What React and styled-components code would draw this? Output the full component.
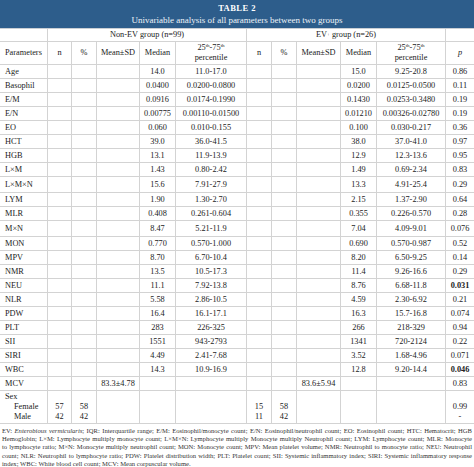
import React from "react";
import styled, { createGlobalStyle } from "styled-components";

const Global = createGlobalStyle`
  html, body { margin: 0; padding: 0; background: #ffffff; }
  body { font-family: "Liberation Serif", "Times New Roman", serif; color: #222; }
  * { box-sizing: border-box; }
`;

const COLS = "48px 24px 25px 43px 36px 71px 25px 25px 44px 36px 69px 1fr";
const LINE = "#d3d3d3";

const Page = styled.div`
  width: 474px;
  height: 467px;
  overflow: hidden;
  display: flex;
  flex-direction: column;
  background: #fff;
`;

const TitleBar = styled.div`
  background: #2d5d8b;
  height: 29px;
  flex: none;
  display: flex;
  flex-direction: column;
  align-items: center;
  justify-content: center;
  color: #fff;
  gap: 2px;
  border-bottom: 1px solid #c9ced4;
`;

const Title = styled.div`
  font-weight: bold;
  font-size: 8.6px;
  letter-spacing: 0.4px;
  line-height: 10px;
`;

const Subtitle = styled.div`
  font-size: 9px;
  line-height: 11px;
  color: #eef3f8;
`;

const Table = styled.div`
  flex: none;
  display: flex;
  flex-direction: column;
  font-size: 8.3px;
`;

const Row = styled.div`
  display: grid;
  grid-template-columns: ${COLS};
  height: ${(p) => p.$h}px;
  flex: none;
  border-bottom: 1px solid ${LINE};
`;

const Cell = styled.div`
  grid-column: span ${(p) => p.$span || 1};
  display: flex;
  align-items: center;
  justify-content: ${(p) => (p.$left ? "flex-start" : "center")};
  padding-left: ${(p) => (p.$left ? 5 : 0)}px;
  border-right: ${(p) => (p.$last ? "none" : `1px solid ${LINE}`)};
  font-weight: ${(p) => (p.$bold ? "bold" : "normal")};
  font-style: ${(p) => (p.$italic ? "italic" : "normal")};
  line-height: 10px;
  white-space: nowrap;
  overflow: hidden;
`;

const Sup = styled.sup`
  font-size: 5px;
  vertical-align: 3px;
  line-height: 0;
`;

const Stack = styled.div`
  display: flex;
  flex-direction: column;
  line-height: 10px;
  align-items: ${(p) => (p.$left ? "flex-start" : "center")};
`;

const Indent = styled.span`
  padding-left: ${(p) => (p.$in ? 9 : 0)}px;
`;

const Footnote = styled.div`
  font-size: 6.6px;
  line-height: 8.2px;
  color: #333;
  padding: 3px 2px 0 2px;
  flex: 1;
`;

const FootLine = styled.div`
  text-align: justify;
  text-align-last: ${(p) => (p.$end ? "left" : "justify")};
  white-space: nowrap;
`;

const Strip = styled.div`
  height: 3px;
  flex: none;
  background: #eceef1;
`;

const rows = [
  ["Age", "14.0", "11.0-17.0", "15.0", "9.25-20.8", "0.86"],
  ["Basophil", "0.0400", "0.0200-0.0800", "0.0200", "0.0125-0.0500", "0.11"],
  ["E/M", "0.0916", "0.0174-0.1990", "0.1430", "0.0253-0.3480", "0.19"],
  ["E/N", "0.00775", "0.00110-0.01500", "0.01210", "0.00326-0.02780", "0.19"],
  ["EO", "0.060", "0.010-0.155", "0.100", "0.030-0.217", "0.36"],
  ["HCT", "39.0", "36.0-41.5", "38.0", "37.0-41.0", "0.97"],
  ["HGB", "13.1", "11.9-13.9", "12.9", "12.3-13.6", "0.95"],
  ["L×M", "1.43", "0.80-2.42", "1.49", "0.69-2.34", "0.83"],
  ["L×M×N", "15.6", "7.91-27.9", "13.3", "4.91-25.4", "0.29", 16],
  ["LYM", "1.90", "1.30-2.70", "2.15", "1.37-2.90", "0.64"],
  ["MLR", "0.408", "0.261-0.604", "0.355", "0.226-0.570", "0.28"],
  ["M×N", "8.47", "5.21-11.9", "7.04", "4.09-9.01", "0.076", 16],
  ["MON", "0.770", "0.570-1.000", "0.690", "0.570-0.987", "0.52"],
  ["MPV", "8.70", "6.70-10.4", "8.20", "6.50-9.25", "0.14"],
  ["NMR", "13.5", "10.5-17.3", "11.4", "9.26-16.6", "0.29"],
  ["NEU", "11.1", "7.92-13.8", "8.76", "6.68-11.8", "0.031", 14, true],
  ["NLR", "5.58", "2.86-10.5", "4.59", "2.30-6.92", "0.21"],
  ["PDW", "16.4", "16.1-17.1", "16.3", "15.7-16.8", "0.074"],
  ["PLT", "283", "226-325", "266", "218-329", "0.94"],
  ["SII", "1551", "943-2793", "1341", "720-2124", "0.22"],
  ["SIRI", "4.49", "2.41-7.68", "3.52", "1.68-4.96", "0.071"],
  ["WBC", "14.3", "10.9-16.9", "12.8", "9.20-14.4", "0.046", 14, true],
];

const Pct = () => (
  <Stack>
    <span>
      25<Sup>th</Sup>-75<Sup>th</Sup>
    </span>
    <span>percentile</span>
  </Stack>
);

const Three = ({ a, b }) => (
  <Stack>
    <span>&nbsp;</span>
    <span>{a}</span>
    <span>{b}</span>
  </Stack>
);

export default function App() {
  return (
    <Page>
      <Global />
      <TitleBar>
        <Title>TABLE 2</Title>
        <Subtitle>Univariable analysis of all parameters between two groups</Subtitle>
      </TitleBar>
      <Table>
        <Row $h={13}>
          <Cell />
          <Cell $span={5}>Non-EV group (n=99)</Cell>
          <Cell $span={5}>
            EV<Sup>+</Sup>&nbsp;group (n=26)
          </Cell>
          <Cell $last />
        </Row>
        <Row $h={23}>
          <Cell $left>Parameters</Cell>
          <Cell>n</Cell>
          <Cell>%</Cell>
          <Cell>Mean±SD</Cell>
          <Cell>Median</Cell>
          <Cell>
            <Pct />
          </Cell>
          <Cell>n</Cell>
          <Cell>%</Cell>
          <Cell>Mean±SD</Cell>
          <Cell>Median</Cell>
          <Cell>
            <Pct />
          </Cell>
          <Cell $last $italic>p</Cell>
        </Row>
        {rows.map(([name, m1, p1, m2, p2, p, h = 14, bold]) => (
          <Row key={name} $h={h}>
            <Cell $left>{name}</Cell>
            <Cell />
            <Cell />
            <Cell />
            <Cell>{m1}</Cell>
            <Cell>{p1}</Cell>
            <Cell />
            <Cell />
            <Cell />
            <Cell>{m2}</Cell>
            <Cell>{p2}</Cell>
            <Cell $last $bold={bold}>{p}</Cell>
          </Row>
        ))}
        <Row $h={14}>
          <Cell $left>MCV</Cell>
          <Cell />
          <Cell />
          <Cell>83.3±4.78</Cell>
          <Cell />
          <Cell />
          <Cell />
          <Cell />
          <Cell>83.6±5.94</Cell>
          <Cell />
          <Cell />
          <Cell $last>0.83</Cell>
        </Row>
        <Row $h={33}>
          <Cell $left>
            <Stack $left>
              <Indent>Sex</Indent>
              <Indent $in>Female</Indent>
              <Indent $in>Male</Indent>
            </Stack>
          </Cell>
          <Cell>
            <Three a="57" b="42" />
          </Cell>
          <Cell>
            <Three a="58" b="42" />
          </Cell>
          <Cell />
          <Cell />
          <Cell />
          <Cell>
            <Three a="15" b="11" />
          </Cell>
          <Cell>
            <Three a="58" b="42" />
          </Cell>
          <Cell />
          <Cell />
          <Cell />
          <Cell $last>
            <Three a="0.99" b="-" />
          </Cell>
        </Row>
      </Table>
      <Footnote>
        <FootLine>
          EV: <i>Enterobious vermicularis</i>; IQR: Interquartile range; E/M: Eosinophil/monocyte count; E/N:
          Eosinophil/neutrophil count; EO: Eosinophil count; HTC: Hematocrit; HGB
        </FootLine>
        <FootLine>
          Hemoglobin; L×M: Lymphocyte multiply monocyte count; L×M×N: Lymphocyte multiply Monocyte multiply
          Neutrophil count; LYM: Lymphocyte count; MLR: Monocyte
        </FootLine>
        <FootLine>
          to lymphocyte ratio; M×N: Monocyte multiply neutrophil count; MON: Monocyte count; MPV: Mean platelet
          volume; NMR: Neutrophil to monocyte ratio; NEU: Neutrophil
        </FootLine>
        <FootLine>
          count; NLR: Neutrophil to lymphocyte ratio; PDW: Platelet distribution width; PLT: Platelet count; SII:
          Systemic inflammatory index; SIRI: Systemic inflammatory response
        </FootLine>
        <FootLine $end>index; WBC: White blood cell count; MCV: Mean corpuscular volume.</FootLine>
      </Footnote>
      <Strip />
    </Page>
  );
}
